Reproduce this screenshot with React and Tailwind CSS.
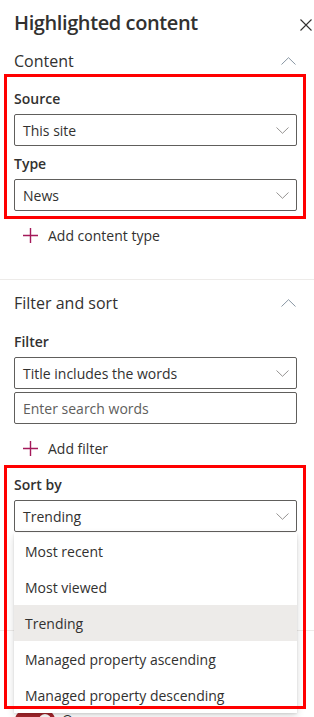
import React from 'react';

const Chevron = ({ up = false }) => (
  <svg width={up ? 15 : 13} height={up ? 8 : 7} viewBox={up ? '0 0 15 8' : '0 0 13 7'} fill="none">
    {up ? (
      <path d="M0.5 7.5 L7.5 0.7 L14.5 7.5" stroke="#7a8a99" strokeWidth="0.9" />
    ) : (
      <path d="M0.5 0.5 L6.5 6.3 L12.5 0.5" stroke="#8a8886" strokeWidth="0.9" />
    )}
  </svg>
);

const Plus = () => (
  <svg width="15" height="15" viewBox="0 0 15 15">
    <path d="M7.5 0 V15 M0 7.5 H15" stroke="#a4195a" strokeWidth="1.4" />
  </svg>
);

const Label = ({ children, className = '' }) => (
  <div className={`py-[5px] text-[14px] leading-5 font-semibold text-[#323130] ${className}`}>{children}</div>
);

const Dropdown = ({ value }) => (
  <div className="h-8 flex items-center justify-between border border-[#605e5c] rounded-[2px] pl-2 pr-[7px] text-[14px] text-[#323130]">
    <span>{value}</span>
    <Chevron />
  </div>
);

const AddRow = ({ label, className = '' }) => (
  <div className={`h-8 flex items-center pl-[9px] gap-[10px] text-[14px] text-[#323130] ${className}`}>
    <Plus />
    <span>{label}</span>
  </div>
);

const SectionHeader = ({ title, className = '' }) => (
  <div className={`flex items-center justify-between pr-[1px] ${className}`}>
    <span className="text-[16px] leading-6 text-[#323130]">{title}</span>
    <Chevron up />
  </div>
);

export default function App() {
  const sortOptions = ['Most recent', 'Most viewed', 'Trending', 'Managed property ascending', 'Managed property descending'];

  return (
    <div className="relative w-[314px] h-[717px] overflow-hidden bg-white" style={{ fontFamily: '"Open Sans", "Noto Sans", sans-serif' }}>
      <div className="pl-[14px] pr-[17px]">
        <div className="flex items-start justify-between pt-[9px]">
          <h1 className="text-[20px] leading-7 font-semibold text-[#323130] tracking-[-0.4px]">Highlighted content</h1>
          <svg width="12" height="12" viewBox="0 0 12 12" className="mt-[10px] -mr-[15px]">
            <path d="M0.5 0.5 L11.5 11.5 M11.5 0.5 L0.5 11.5" stroke="#323130" strokeWidth="1.1" />
          </svg>
        </div>

        <SectionHeader title="Content" className="mt-[12px] h-6" />

        <Label className="mt-[11px]">Source</Label>
        <Dropdown value="This site" />
        <Label className="mt-[3px]">Type</Label>
        <Dropdown value="News" />
        <AddRow label="Add content type" className="mt-2" />
      </div>

      <div className="mt-[28px] h-px bg-[#edebe9]" />

      <div className="pl-[14px] pr-[17px]">
        <SectionHeader title="Filter and sort" className="mt-[11px] h-6" />
        <Label className="mt-[12px]">Filter</Label>
        <Dropdown value="Title includes the words" />
        <div className="mt-[3px] h-8 flex items-center border border-[#605e5c] rounded-[2px] pl-2 text-[14px] text-[#605e5c]">
          Enter search words
        </div>
        <AddRow label="Add filter" className="mt-2" />
        <Label className="mt-[6px]">Sort by</Label>
        <Dropdown value="Trending" />
      </div>

      <div className="mt-[98px] h-px bg-[#edebe9]" />

      <div className="pl-[15px] mt-[78px] flex items-center gap-[7px]">
        <div className="w-10 h-5 rounded-full bg-[#a4262c] flex items-center justify-end pr-[4px]">
          <div className="w-3 h-3 rounded-full bg-white" />
        </div>
        <span className="text-[14px] text-[#323130]">On</span>
      </div>

      {/* open sort menu */}
      <div className="absolute left-[14px] top-[533px] w-[283px] bg-white shadow-[0_3px_8px_rgba(0,0,0,0.14),0_1px_2px_rgba(0,0,0,0.1)]">
        {sortOptions.map((opt) => (
          <div
            key={opt}
            className={`h-9 flex items-center pl-[11px] text-[14px] text-[#323130] ${opt === 'Trending' ? 'bg-[#edebe9]' : ''}`}
          >
            {opt}
          </div>
        ))}
      </div>

      {/* annotation boxes */}
      <div className="absolute left-[4px] top-[74px] w-[302px] h-[145px] border-[3px] border-[#ff0000] pointer-events-none" />
      <div className="absolute left-[4px] top-[465px] w-[302px] h-[244px] border-[3px] border-[#ff0000] pointer-events-none" />
    </div>
  );
}
